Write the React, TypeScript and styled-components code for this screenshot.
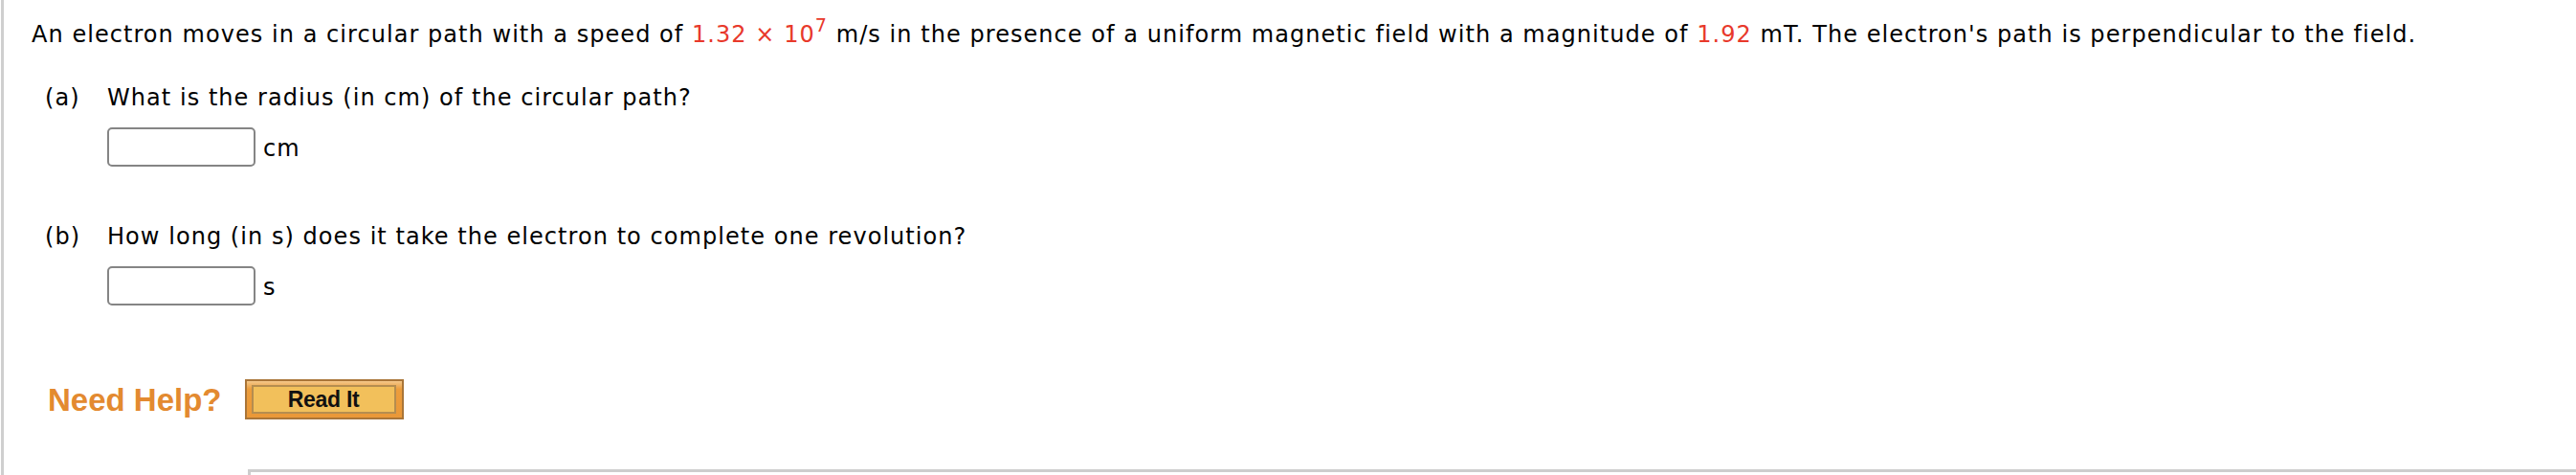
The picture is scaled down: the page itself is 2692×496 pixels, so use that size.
import React from "react";
import styled, { createGlobalStyle } from "styled-components";

const GlobalStyle = createGlobalStyle`
  html, body {
    margin: 0;
    padding: 0;
    background: #fff;
  }
  body {
    font-family: "DejaVu Sans", Verdana, sans-serif;
    color: #000;
  }
`;

const Page = styled.div`
  box-sizing: border-box;
  min-height: 100vh;
  height: 100vh;
  overflow: hidden;
  margin-left: 1px;
  border-left: 3px solid #cfcfcf;
  padding: 18px 0 0 29px;
  font-size: 24px;
  line-height: 36px;
  letter-spacing: 1.05px;
`;

const Question = styled.p`
  margin: 0;
  white-space: nowrap;
`;

const Value = styled.span`
  color: #e8392b;
`;

const Sup = styled.sup`
  font-size: 0.8em;
  line-height: 0;
  vertical-align: 0;
  position: relative;
  top: -0.55em;
`;

const Part = styled.div<{ $gap: number }>`
  margin-top: ${(p) => p.$gap}px;
  padding-left: 14px;
`;

const PartRow = styled.div`
  display: flex;
`;

const PartLabel = styled.span`
  width: 65px;
  flex: none;
`;

const AnswerRow = styled.div`
  display: flex;
  align-items: center;
  gap: 8px;
  margin-top: 13px;
  margin-left: 65px;
`;

const AnswerBox = styled.input`
  box-sizing: border-box;
  width: 155px;
  height: 41px;
  border: 2px solid #858585;
  border-radius: 5px;
  background: #fff;
  padding: 0 6px;
  font: inherit;
  outline: none;
`;

const Unit = styled.span`
  line-height: 1;
  margin-top: 2px;
`;

const HelpRow = styled.div`
  display: flex;
  align-items: center;
  margin-top: 77px;
  margin-left: 17px;
  letter-spacing: 0;
`;

const HelpTitle = styled.span`
  font-family: "Liberation Sans", Arial, sans-serif;
  font-weight: bold;
  font-size: 33px;
  line-height: 1;
  color: #e38a30;
  margin-right: 24px;
`;

const ReadItButton = styled.button`
  box-sizing: border-box;
  width: 166px;
  height: 42px;
  padding: 4px 6px 4px 5px;
  border: 2px solid #a97538;
  background: linear-gradient(#f4c88a 0%, #ec9d3c 22%, #ea9838 100%);
  cursor: pointer;
  display: flex;
`;

const ReadItInner = styled.span`
  flex: 1;
  display: flex;
  align-items: center;
  justify-content: center;
  border: 2px solid #b58d4f;
  background: #f2c05b;
  font-family: "Liberation Sans", Arial, sans-serif;
  font-weight: bold;
  font-size: 23px;
  color: #111;
  letter-spacing: -0.3px;
`;

const FooterPanel = styled.div`
  margin-top: 52px;
  margin-left: 226px;
  height: 40px;
  border-top: 3px solid #cdcdcd;
  border-left: 3px solid #cdcdcd;
`;

export default function App() {
  return (
    <>
      <GlobalStyle />
      <Page>
        <Question>
          An electron moves in a circular path with a speed of{" "}
          <Value>
            1.32 × 10<Sup>7</Sup>
          </Value>{" "}
          m/s in the presence of a uniform magnetic field with a magnitude of{" "}
          <Value>1.92</Value> mT. The electron's path is perpendicular to the
          field.
        </Question>

        <Part $gap={30}>
          <PartRow>
            <PartLabel>(a)</PartLabel>
            <span>What is the radius (in cm) of the circular path?</span>
          </PartRow>
          <AnswerRow>
            <AnswerBox type="text" />
            <Unit>cm</Unit>
          </AnswerRow>
        </Part>

        <Part $gap={55}>
          <PartRow>
            <PartLabel>(b)</PartLabel>
            <span>How long (in s) does it take the electron to complete one revolution?</span>
          </PartRow>
          <AnswerRow>
            <AnswerBox type="text" />
            <Unit>s</Unit>
          </AnswerRow>
        </Part>

        <HelpRow>
          <HelpTitle>Need Help?</HelpTitle>
          <ReadItButton type="button">
            <ReadItInner>Read It</ReadItInner>
          </ReadItButton>
        </HelpRow>

        <FooterPanel />
      </Page>
    </>
  );
}
